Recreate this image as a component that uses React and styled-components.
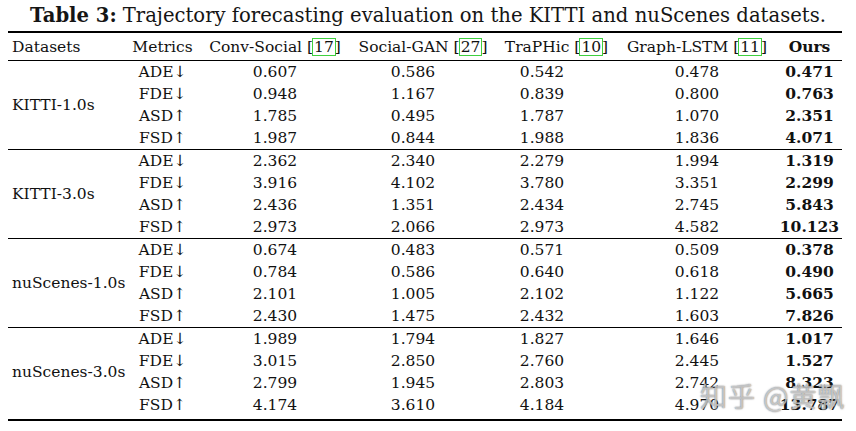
import styled, { createGlobalStyle } from "styled-components";

const GlobalStyle = createGlobalStyle`
  html, body {
    margin: 0;
    padding: 0;
    background: #ffffff;
  }
`;

const serif = `"DejaVu Serif", "Liberation Serif", serif`;
const columns = "117px 75px 150px 146px 121px 160px 65px";

const Page = styled.div`
  position: relative;
  width: 856px;
  height: 431px;
  overflow: hidden;
  background: #fff;
  color: #111;
  font-family: ${serif};
`;

const Caption = styled.div`
  height: 31px;
  display: flex;
  align-items: center;
  justify-content: center;
  font-size: 19.6px;
  white-space: nowrap;
  color: #151515;

  b {
    font-weight: 700;
    margin-right: 6px;
  }
`;

const Table = styled.div`
  margin-left: 8px;
  width: 834px;
  border-top: 2px solid #000;
`;

const HeaderRow = styled.div`
  display: grid;
  grid-template-columns: ${columns};
  height: 27px;
  align-items: center;
  border-bottom: 1px solid #000;
  font-size: 15.5px;
`;

const Group = styled.div`
  display: grid;
  grid-template-columns: ${columns};
  grid-template-rows: repeat(4, 22px);
  align-items: center;
  padding-bottom: ${({ $last }) => ($last ? "3px" : "0")};
  border-bottom: ${({ $last }) => ($last ? "2px" : "1px")} solid #000;
  font-size: 15.5px;
`;

const Cell = styled.div`
  text-align: ${({ $left }) => ($left ? "left" : "center")};
  padding-left: ${({ $left }) => ($left ? "4px" : "0")};
  padding-right: ${({ $shift }) => $shift || 0}px;
  font-weight: ${({ $bold }) => ($bold ? 700 : 400)};
  white-space: nowrap;
  line-height: 22px;
`;

const DatasetCell = styled(Cell)`
  grid-column: 1;
  grid-row: 1 / -1;
  align-self: center;
`;

const Cite = styled.span`
  display: inline-block;
  border: 1px solid #3fd03f;
  line-height: 16px;
  padding: 0 1px;
  margin: 0 -1px;
`;

const Watermark = styled.div`
  position: absolute;
  left: 700px;
  top: 376px;
  font-family: "Noto Sans CJK SC", "DejaVu Sans", sans-serif;
  font-size: 27px;
  letter-spacing: 1px;
  color: rgba(255, 255, 255, 0.55);
  text-shadow: 0 0 1px rgba(90, 90, 90, 0.7), 0 0 2px rgba(90, 90, 90, 0.5);
  white-space: nowrap;
  pointer-events: none;
`;

const headers = [
  { name: "Conv-Social", ref: "17" },
  { name: "Social-GAN", ref: "27" },
  { name: "TraPHic", ref: "10" },
  { name: "Graph-LSTM", ref: "11" },
];

// value columns 4 and 5 sit a little left of their headers in the source
const shifts = [0, 20, 29, 0, 0];

const groups = [
  {
    name: "KITTI-1.0s",
    rows: [
      ["ADE↓", "0.607", "0.586", "0.542", "0.478", "0.471"],
      ["FDE↓", "0.948", "1.167", "0.839", "0.800", "0.763"],
      ["ASD↑", "1.785", "0.495", "1.787", "1.070", "2.351"],
      ["FSD↑", "1.987", "0.844", "1.988", "1.836", "4.071"],
    ],
  },
  {
    name: "KITTI-3.0s",
    rows: [
      ["ADE↓", "2.362", "2.340", "2.279", "1.994", "1.319"],
      ["FDE↓", "3.916", "4.102", "3.780", "3.351", "2.299"],
      ["ASD↑", "2.436", "1.351", "2.434", "2.745", "5.843"],
      ["FSD↑", "2.973", "2.066", "2.973", "4.582", "10.123"],
    ],
  },
  {
    name: "nuScenes-1.0s",
    rows: [
      ["ADE↓", "0.674", "0.483", "0.571", "0.509", "0.378"],
      ["FDE↓", "0.784", "0.586", "0.640", "0.618", "0.490"],
      ["ASD↑", "2.101", "1.005", "2.102", "1.122", "5.665"],
      ["FSD↑", "2.430", "1.475", "2.432", "1.603", "7.826"],
    ],
  },
  {
    name: "nuScenes-3.0s",
    rows: [
      ["ADE↓", "1.989", "1.794", "1.827", "1.646", "1.017"],
      ["FDE↓", "3.015", "2.850", "2.760", "2.445", "1.527"],
      ["ASD↑", "2.799", "1.945", "2.803", "2.742", "8.323"],
      ["FSD↑", "4.174", "3.610", "4.184", "4.970", "13.787"],
    ],
  },
];

export default function App() {
  return (
    <Page>
      <GlobalStyle />
      <Caption>
        <b>Table 3:</b> Trajectory forecasting evaluation on the KITTI and
        nuScenes datasets.
      </Caption>
      <Table>
        <HeaderRow>
          <Cell $left>Datasets</Cell>
          <Cell>Metrics</Cell>
          {headers.map((h) => (
            <Cell key={h.name}>
              {h.name} [<Cite>{h.ref}</Cite>]
            </Cell>
          ))}
          <Cell $bold>Ours</Cell>
        </HeaderRow>
        {groups.map((g, gi) => (
          <Group key={g.name} $last={gi === groups.length - 1}>
            <DatasetCell $left>{g.name}</DatasetCell>
            {g.rows.map((row) =>
              row.map((v, i) => (
                <Cell
                  key={row[0] + i}
                  $bold={i === 5}
                  $shift={i > 0 ? shifts[i - 1] : 0}
                >
                  {v}
                </Cell>
              ))
            )}
          </Group>
        ))}
      </Table>
      <Watermark>知乎 @黄飘</Watermark>
    </Page>
  );
}
